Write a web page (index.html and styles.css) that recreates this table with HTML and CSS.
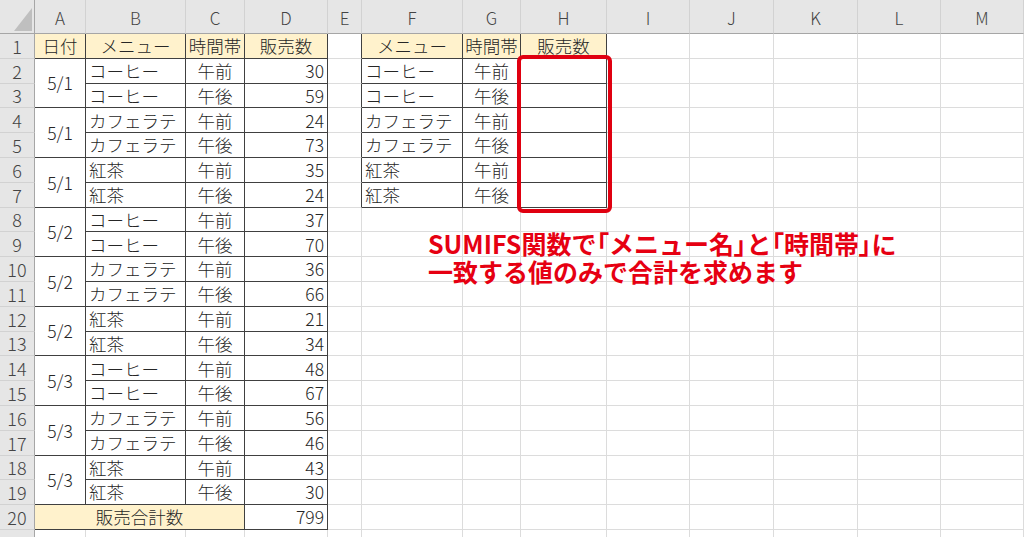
FILE: index.html
```html
<!DOCTYPE html>
<html lang="ja">
<head>
<meta charset="utf-8">
<title>SUMIFS</title>
<link rel="stylesheet" href="styles.css">
</head>
<body>
<div class="sheet">
  <div class="grid">
    <div class="c ch corner"><span class="tri"></span></div>
    <div class="c ch">A</div><div class="c ch">B</div><div class="c ch">C</div><div class="c ch">D</div><div class="c ch">E</div><div class="c ch">F</div><div class="c ch">G</div><div class="c ch">H</div><div class="c ch">I</div><div class="c ch">J</div><div class="c ch">K</div><div class="c ch">L</div><div class="c ch">M</div>

    <div class="c rh">1</div>
    <div class="c t y m">日付</div><div class="c t y m">メニュー</div><div class="c t y m">時間帯</div><div class="c t y m">販売数</div>
    <div class="c eb"></div>
    <div class="c t y m">メニュー</div><div class="c t y m">時間帯</div><div class="c t y m">販売数</div>
    <div class="c"></div><div class="c"></div><div class="c"></div><div class="c"></div><div class="c"></div>

    <div class="c rh">2</div>
    <div class="c t m s2">5/1</div><div class="c t">コーヒー</div><div class="c t m">午前</div><div class="c t r">30</div>
    <div class="c eb"></div>
    <div class="c t">コーヒー</div><div class="c t m">午前</div><div class="c t"></div>
    <div class="c"></div><div class="c"></div><div class="c"></div><div class="c"></div><div class="c"></div>

    <div class="c rh">3</div>
    <div class="c t">コーヒー</div><div class="c t m">午後</div><div class="c t r">59</div>
    <div class="c eb"></div>
    <div class="c t">コーヒー</div><div class="c t m">午後</div><div class="c t"></div>
    <div class="c"></div><div class="c"></div><div class="c"></div><div class="c"></div><div class="c"></div>

    <div class="c rh">4</div>
    <div class="c t m s2">5/1</div><div class="c t">カフェラテ</div><div class="c t m">午前</div><div class="c t r">24</div>
    <div class="c eb"></div>
    <div class="c t">カフェラテ</div><div class="c t m">午前</div><div class="c t"></div>
    <div class="c"></div><div class="c"></div><div class="c"></div><div class="c"></div><div class="c"></div>

    <div class="c rh">5</div>
    <div class="c t">カフェラテ</div><div class="c t m">午後</div><div class="c t r">73</div>
    <div class="c eb"></div>
    <div class="c t">カフェラテ</div><div class="c t m">午後</div><div class="c t"></div>
    <div class="c"></div><div class="c"></div><div class="c"></div><div class="c"></div><div class="c"></div>

    <div class="c rh">6</div>
    <div class="c t m s2">5/1</div><div class="c t">紅茶</div><div class="c t m">午前</div><div class="c t r">35</div>
    <div class="c eb"></div>
    <div class="c t">紅茶</div><div class="c t m">午前</div><div class="c t"></div>
    <div class="c"></div><div class="c"></div><div class="c"></div><div class="c"></div><div class="c"></div>

    <div class="c rh">7</div>
    <div class="c t">紅茶</div><div class="c t m">午後</div><div class="c t r">24</div>
    <div class="c eb"></div>
    <div class="c t">紅茶</div><div class="c t m">午後</div><div class="c t"></div>
    <div class="c"></div><div class="c"></div><div class="c"></div><div class="c"></div><div class="c"></div>

    <div class="c rh">8</div>
    <div class="c t m s2">5/2</div><div class="c t">コーヒー</div><div class="c t m">午前</div><div class="c t r">37</div>
    <div class="c"></div><div class="c"></div><div class="c"></div><div class="c"></div>
    <div class="c"></div><div class="c"></div><div class="c"></div><div class="c"></div><div class="c"></div>

    <div class="c rh">9</div>
    <div class="c t">コーヒー</div><div class="c t m">午後</div><div class="c t r">70</div>
    <div class="c"></div><div class="c"></div><div class="c"></div><div class="c"></div>
    <div class="c"></div><div class="c"></div><div class="c"></div><div class="c"></div><div class="c"></div>

    <div class="c rh">10</div>
    <div class="c t m s2">5/2</div><div class="c t">カフェラテ</div><div class="c t m">午前</div><div class="c t r">36</div>
    <div class="c"></div><div class="c"></div><div class="c"></div><div class="c"></div>
    <div class="c"></div><div class="c"></div><div class="c"></div><div class="c"></div><div class="c"></div>

    <div class="c rh">11</div>
    <div class="c t">カフェラテ</div><div class="c t m">午後</div><div class="c t r">66</div>
    <div class="c"></div><div class="c"></div><div class="c"></div><div class="c"></div>
    <div class="c"></div><div class="c"></div><div class="c"></div><div class="c"></div><div class="c"></div>

    <div class="c rh">12</div>
    <div class="c t m s2">5/2</div><div class="c t">紅茶</div><div class="c t m">午前</div><div class="c t r">21</div>
    <div class="c"></div><div class="c"></div><div class="c"></div><div class="c"></div>
    <div class="c"></div><div class="c"></div><div class="c"></div><div class="c"></div><div class="c"></div>

    <div class="c rh">13</div>
    <div class="c t">紅茶</div><div class="c t m">午後</div><div class="c t r">34</div>
    <div class="c"></div><div class="c"></div><div class="c"></div><div class="c"></div>
    <div class="c"></div><div class="c"></div><div class="c"></div><div class="c"></div><div class="c"></div>

    <div class="c rh">14</div>
    <div class="c t m s2">5/3</div><div class="c t">コーヒー</div><div class="c t m">午前</div><div class="c t r">48</div>
    <div class="c"></div><div class="c"></div><div class="c"></div><div class="c"></div>
    <div class="c"></div><div class="c"></div><div class="c"></div><div class="c"></div><div class="c"></div>

    <div class="c rh">15</div>
    <div class="c t">コーヒー</div><div class="c t m">午後</div><div class="c t r">67</div>
    <div class="c"></div><div class="c"></div><div class="c"></div><div class="c"></div>
    <div class="c"></div><div class="c"></div><div class="c"></div><div class="c"></div><div class="c"></div>

    <div class="c rh">16</div>
    <div class="c t m s2">5/3</div><div class="c t">カフェラテ</div><div class="c t m">午前</div><div class="c t r">56</div>
    <div class="c"></div><div class="c"></div><div class="c"></div><div class="c"></div>
    <div class="c"></div><div class="c"></div><div class="c"></div><div class="c"></div><div class="c"></div>

    <div class="c rh">17</div>
    <div class="c t">カフェラテ</div><div class="c t m">午後</div><div class="c t r">46</div>
    <div class="c"></div><div class="c"></div><div class="c"></div><div class="c"></div>
    <div class="c"></div><div class="c"></div><div class="c"></div><div class="c"></div><div class="c"></div>

    <div class="c rh">18</div>
    <div class="c t m s2">5/3</div><div class="c t">紅茶</div><div class="c t m">午前</div><div class="c t r">43</div>
    <div class="c"></div><div class="c"></div><div class="c"></div><div class="c"></div>
    <div class="c"></div><div class="c"></div><div class="c"></div><div class="c"></div><div class="c"></div>

    <div class="c rh">19</div>
    <div class="c t">紅茶</div><div class="c t m">午後</div><div class="c t r">30</div>
    <div class="c"></div><div class="c"></div><div class="c"></div><div class="c"></div>
    <div class="c"></div><div class="c"></div><div class="c"></div><div class="c"></div><div class="c"></div>

    <div class="c rh">20</div>
    <div class="c t y m s3">販売合計数</div><div class="c t r">799</div>
    <div class="c"></div><div class="c"></div><div class="c"></div><div class="c"></div>
    <div class="c"></div><div class="c"></div><div class="c"></div><div class="c"></div><div class="c"></div>

    <div class="c rh">21</div>
    <div class="c"></div><div class="c"></div><div class="c"></div><div class="c"></div>
    <div class="c"></div><div class="c"></div><div class="c"></div><div class="c"></div>
    <div class="c"></div><div class="c"></div><div class="c"></div><div class="c"></div><div class="c"></div>
  </div>

  <div class="highlight"></div>
  <p class="note">SUMIFS関数で<span class="br">「</span>メニュー名<span class="br">」</span>と<span class="br">「</span>時間帯<span class="br">」</span>に<br>一致する値のみで合計を求めます</p>
</div>
</body>
</html>
```

FILE: styles.css
```css
html, body {
  margin: 0;
  padding: 0;
  background: #ffffff;
}

body {
  width: 1024px;
  height: 537px;
  overflow: hidden;
  font-family: "Noto Sans CJK JP", "Noto Sans", sans-serif;
  color: #262626;
}

.sheet {
  position: relative;
  width: 1024px;
  height: 537px;
  overflow: hidden;
}

.grid {
  display: grid;
  grid-template-columns: 35px 51px 100px 59px 83px 34px 101px 58px 86px 83px 84px 84px 83px 1fr;
  grid-template-rows: 34px;
  grid-auto-rows: 24.8px;
}

.c {
  box-sizing: border-box;
  display: flex;
  align-items: center;
  padding: 0 3px;
  border-right: 1px solid #dcdcdc;
  border-bottom: 1px solid #dcdcdc;
  font-size: 17.5px;
  font-weight: 300;
  line-height: 1;
  white-space: nowrap;
  overflow: hidden;
}

.ch {
  background: #e6e6e6;
  border-right-color: #d2d2d2;
  border-bottom: 1px solid #a6a6a6;
  justify-content: center;
  color: #444444;
  font-size: 17px;
  padding-top: 2px;
}

.corner {
  position: relative;
  border-right-color: #a6a6a6;
}

.tri {
  position: absolute;
  right: 2px;
  bottom: 2px;
  width: 0;
  height: 0;
  border-left: 18px solid transparent;
  border-bottom: 23px solid #bfbfbf;
}

.rh {
  background: #e6e6e6;
  border-right-color: #a6a6a6;
  border-bottom-color: #d2d2d2;
  justify-content: center;
  color: #444444;
  font-size: 18px;
  padding: 0;
}

.t {
  border-right-color: #404040;
  border-bottom-color: #404040;
}

.eb {
  border-right-color: #404040;
}

.y {
  background: #fff2cc;
}

.m {
  justify-content: center;
}

.r {
  justify-content: flex-end;
}

.s2 {
  grid-row: span 2;
}

.s3 {
  grid-column: span 3;
}

.highlight {
  position: absolute;
  left: 517px;
  top: 55px;
  width: 95px;
  height: 158px;
  box-sizing: border-box;
  border: 4px solid #e00010;
  border-radius: 6px;
}

.note {
  position: absolute;
  left: 428px;
  top: 229px;
  margin: 0;
  font-size: 25px;
  line-height: 28px;
  font-weight: 700;
  color: #e60012;
  white-space: nowrap;
}

.br {
  font-feature-settings: "palt";
}
```
